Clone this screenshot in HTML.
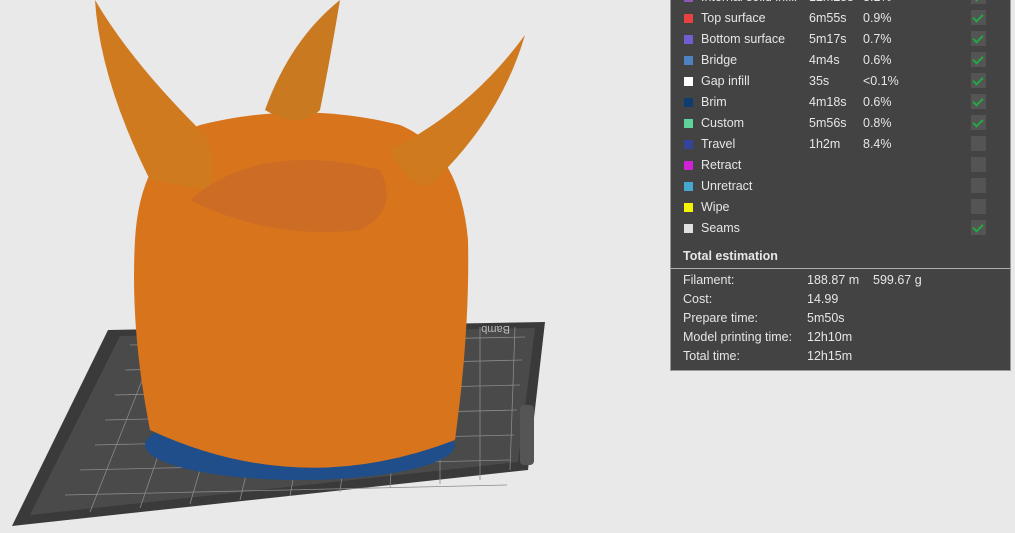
<!DOCTYPE html>
<html><head><style>
body{margin:0;width:1015px;height:533px;overflow:hidden;background:#e9e9ea;font-family:"Liberation Sans",sans-serif;position:relative}
#p{position:absolute;left:670px;top:-2px;width:339px;height:372px;background:#434343;border:1px solid #9a9a9a;border-top:none;color:#e6e6e6;font-size:12.5px}
.r{position:absolute;left:0;height:21px;width:339px}
.r i{position:absolute;left:13px;top:5px;width:9px;height:9px}
.r .n{position:absolute;left:30px;top:2px}
.r .t{position:absolute;left:138px;top:2px}
.r .c{position:absolute;left:192px;top:2px}
.r b{position:absolute;left:300px;top:1px;width:15px;height:15px;background:#545454}
.r b.k:after{content:"";position:absolute;left:4px;top:2px;width:4px;height:8px;border:solid #22a845;border-width:0 2px 2px 0;transform:rotate(45deg)}
.s{position:absolute;left:12px;font-size:12.5px}
.v{position:absolute;left:136px;font-size:12.5px}
</style></head><body>
<svg width="670" height="533" style="position:absolute;left:0;top:0">
<polygon points="108,330 545,322 528,470 12,526" fill="#3a3a3a"/>
<polygon points="120,336 535,328 518,462 30,515" fill="#4a4a4a"/>
<g stroke="#8a8a8a" stroke-width="0.8">
<path d="M130,345 L525,337 M125,370 L522,360 M115,395 L520,385 M105,420 L517,410 M95,445 L514,435 M80,470 L510,460 M65,495 L507,485"/>
<path d="M160,335 L90,512 M200,334 L140,508 M240,333 L190,504 M280,332 L240,500 M320,331 L290,496 M360,330 L340,492 M400,329 L390,488 M440,328 L440,484 M480,327 L480,480 M515,327 L510,470"/>
</g>
<rect x="520" y="405" width="14" height="60" rx="4" fill="#555"/>
<ellipse cx="300" cy="445" rx="155" ry="35" fill="#1f4e8a"/>
<path d="M150,430 Q130,330 135,240 Q140,150 200,125 Q300,100 400,125 Q460,150 468,240 Q470,330 455,440 Q300,500 150,430Z" fill="#d7741c"/>
<path d="M150,180 Q100,80 95,0 Q130,60 200,130 Q220,150 210,190Z" fill="#cf7a1e"/>
<path d="M265,110 Q290,40 340,0 Q330,60 320,110 Q300,130 265,110Z" fill="#c97a20"/>
<path d="M390,150 Q470,110 525,35 Q500,120 430,185 Q410,190 390,150Z" fill="#cf7a1e"/>
<path d="M190,200 Q260,140 380,170 Q400,210 360,230 Q270,240 190,200Z" fill="#c7682a" opacity=".6"/>
<text x="470" y="330" fill="#bbb" font-size="11" transform="rotate(180 490 328)">Bamb</text>
</svg>
<div id="p">
<div class="r" style="top:-10px"><i style="background:#8e59b8"></i><span class="n">Internal solid infill</span><span class="t">12m25s</span><span class="c">3.1%</span><b class="k"></b></div>
<div class="r" style="top:11px"><i style="background:#e94040"></i><span class="n">Top surface</span><span class="t">6m55s</span><span class="c">0.9%</span><b class="k"></b></div>
<div class="r" style="top:32px"><i style="background:#6d5fd0"></i><span class="n">Bottom surface</span><span class="t">5m17s</span><span class="c">0.7%</span><b class="k"></b></div>
<div class="r" style="top:53px"><i style="background:#4f82c2"></i><span class="n">Bridge</span><span class="t">4m4s</span><span class="c">0.6%</span><b class="k"></b></div>
<div class="r" style="top:74px"><i style="background:#fff"></i><span class="n">Gap infill</span><span class="t">35s</span><span class="c">&lt;0.1%</span><b class="k"></b></div>
<div class="r" style="top:95px"><i style="background:#0f3d72"></i><span class="n">Brim</span><span class="t">4m18s</span><span class="c">0.6%</span><b class="k"></b></div>
<div class="r" style="top:116px"><i style="background:#5ed49a"></i><span class="n">Custom</span><span class="t">5m56s</span><span class="c">0.8%</span><b class="k"></b></div>
<div class="r" style="top:137px"><i style="background:#34449a"></i><span class="n">Travel</span><span class="t">1h2m</span><span class="c">8.4%</span><b></b></div>
<div class="r" style="top:158px"><i style="background:#d022d4"></i><span class="n">Retract</span><b></b></div>
<div class="r" style="top:179px"><i style="background:#45a8d0"></i><span class="n">Unretract</span><b></b></div>
<div class="r" style="top:200px"><i style="background:#f4f400"></i><span class="n">Wipe</span><b></b></div>
<div class="r" style="top:221px"><i style="background:#e0e0e0"></i><span class="n">Seams</span><b class="k"></b></div>
<div class="s" style="top:251px;font-weight:bold">Total estimation</div>
<div style="position:absolute;left:0;top:270px;width:339px;height:1px;background:#b0b0b0"></div>
<div class="s" style="top:275px">Filament:</div><div class="v" style="top:275px">188.87 m&nbsp;&nbsp;&nbsp;&nbsp;599.67 g</div>
<div class="s" style="top:294px">Cost:</div><div class="v" style="top:294px">14.99</div>
<div class="s" style="top:313px">Prepare time:</div><div class="v" style="top:313px">5m50s</div>
<div class="s" style="top:332px">Model printing time:</div><div class="v" style="top:332px">12h10m</div>
<div class="s" style="top:351px">Total time:</div><div class="v" style="top:351px">12h15m</div>
</div>
</body></html>
